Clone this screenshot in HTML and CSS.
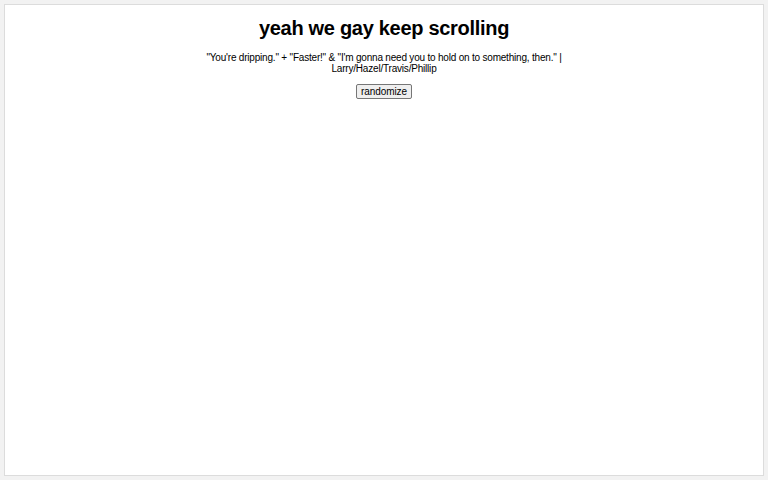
FILE: index.html
```html
<!DOCTYPE html>
<html>
<head>
<meta charset="utf-8">
<title>yeah we gay keep scrolling</title>
<link rel="stylesheet" href="styles.css">
</head>
<body>
<div class="page">
  <h1 class="title">yeah we gay keep scrolling</h1>
  <p class="prompt">"You're dripping." + "Faster!" &amp; "I'm gonna need you to hold on to something, then." |<br>Larry/Hazel/Travis/Phillip</p>
  <button class="randomize" type="button">randomize</button>
</div>
</body>
</html>
```

FILE: styles.css
```css
html, body {
  height: 100%;
}
body {
  margin: 0;
  padding: 4px;
  box-sizing: border-box;
  background: #f2f2f2;
  font-family: "Liberation Sans", Arial, sans-serif;
  color: #000;
}
.page {
  height: 100%;
  box-sizing: border-box;
  background: #fff;
  border: 1px solid #dcdcdc;
  display: flex;
  flex-direction: column;
  align-items: center;
  text-align: center;
}
.title {
  margin: 12px 0 0;
  font-size: 20px;
  line-height: 23px;
  font-weight: bold;
  letter-spacing: -0.3px;
}
.prompt {
  margin: 12px 0 0;
  font-size: 10px;
  line-height: 11px;
  letter-spacing: -0.2px;
  white-space: nowrap;
}
.randomize {
  margin-top: 10px;
  font-family: "Liberation Sans", Arial, sans-serif;
  font-size: 10px;
  letter-spacing: -0.1px;
  padding: 1px 4px;
  background: #efefef;
  border: 1px solid #767676;
  border-radius: 2px;
  color: #000;
}
```
